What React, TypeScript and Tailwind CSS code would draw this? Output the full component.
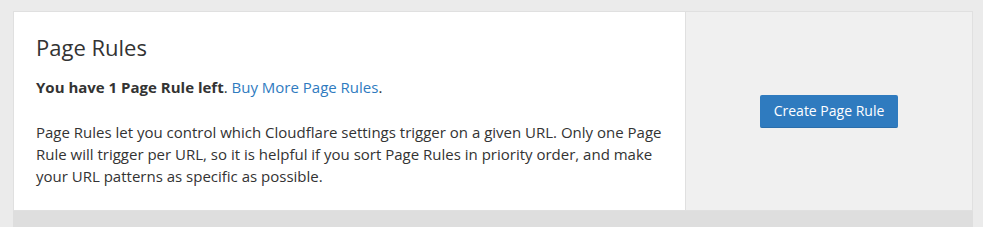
export default function App() {
  return (
    <div className="h-[227px] overflow-hidden bg-[#ebebeb] pt-[11px] pl-[13px] font-['Open_Sans',sans-serif] text-[#333]">
      <div className="w-[960px]">
        {/* Card */}
        <div className="flex h-[200px] border border-[#e0e0e0] bg-white">
          <div className="w-[671px] pl-[22px] pr-[20px] pt-[22px]">
            <h2 className="text-[22px] leading-[26.4px] font-normal text-[#333]">Page Rules</h2>
            <p className="mt-[16px] text-[15px] leading-[22px]">
              <strong className="font-bold">You have 1 Page Rule left</strong>.{' '}
              <a href="#" className="text-[#2f7bbf]">
                Buy More Page Rules
              </a>
              .
            </p>
            <p className="mt-[23px] text-[15px] leading-[22px]">
              Page Rules let you control which Cloudflare settings trigger on a given URL. Only one Page Rule
              will trigger per URL, so it is helpful if you sort Page Rules in priority order, and make your URL
              patterns as specific as possible.
            </p>
          </div>
          <div className="flex flex-1 items-center justify-center border-l border-[#e0e0e0] bg-[#f0f0f0]">
            <button
              type="button"
              className="h-[33px] rounded-[2px] bg-[#2f7bbf] px-[14px] text-[14px] text-white border-b border-[#2a6eab]"
            >
              Create Page Rule
            </button>
          </div>
        </div>
        {/* Next card (cut off) */}
        <div className="h-[16px] bg-[#dedede]" />
      </div>
    </div>
  );
}
